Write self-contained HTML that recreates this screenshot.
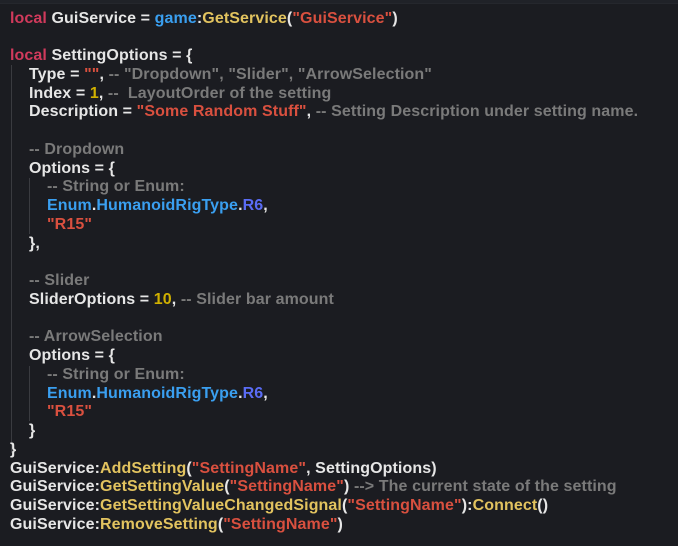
<!DOCTYPE html><html><head><style>
html,body{margin:0;padding:0;background:#1b1c21;width:678px;height:546px;overflow:hidden}
.top{position:absolute;left:0;top:0;width:678px;height:3px;background:#202228;border-bottom:1px solid #25272d}
#c{position:absolute;left:10px;top:9.5px;font:bold 16px/18.76px "Liberation Sans",sans-serif;color:#e6e6e6;letter-spacing:0.1px}
#c div{height:18.76px;white-space:pre}
.i1{padding-left:19px}.i2{padding-left:37px}
.k{color:#d13a5c}.b{color:#3a9ff0}.f{color:#e2c35f}.s{color:#d9503f}.c{color:#7a7a7a}.n{color:#d0b000}.r{color:#5a6cf5}
.g{position:absolute;width:1px;background:#3a3b40}
</style></head><body>
<div class="top"></div>
<div class="g" style="left:11px;top:65px;height:388px"></div>
<div class="g" style="left:29px;top:178px;height:56px"></div>
<div class="g" style="left:29px;top:366px;height:55px"></div>
<div id="c">
<div><span class="k">local</span> GuiService = <span class="b">game</span>:<span class="f">GetService</span>(<span class="s">"GuiService"</span>)</div>
<div></div>
<div><span class="k">local</span> SettingOptions = {</div>
<div class="i1">Type = <span class="s">""</span>, <span class="c">-- "Dropdown", "Slider", "ArrowSelection"</span></div>
<div class="i1">Index = <span class="n">1</span>, <span class="c">--  LayoutOrder of the setting</span></div>
<div class="i1">Description = <span class="s">"Some Random Stuff"</span>, <span class="c">-- Setting Description under setting name.</span></div>
<div></div>
<div class="i1"><span class="c">-- Dropdown</span></div>
<div class="i1">Options = {</div>
<div class="i2"><span class="c">-- String or Enum:</span></div>
<div class="i2"><span class="b">Enum</span>.<span class="b">HumanoidRigType</span>.<span class="r">R6</span>,</div>
<div class="i2"><span class="s">"R15"</span></div>
<div class="i1">},</div>
<div></div>
<div class="i1"><span class="c">-- Slider</span></div>
<div class="i1">SliderOptions = <span class="n">10</span>, <span class="c">-- Slider bar amount</span></div>
<div></div>
<div class="i1"><span class="c">-- ArrowSelection</span></div>
<div class="i1">Options = {</div>
<div class="i2"><span class="c">-- String or Enum:</span></div>
<div class="i2"><span class="b">Enum</span>.<span class="b">HumanoidRigType</span>.<span class="r">R6</span>,</div>
<div class="i2"><span class="s">"R15"</span></div>
<div class="i1">}</div>
<div>}</div>
<div>GuiService:<span class="f">AddSetting</span>(<span class="s">"SettingName"</span>, SettingOptions)</div>
<div>GuiService:<span class="f">GetSettingValue</span>(<span class="s">"SettingName"</span>) <span class="c">--&gt; The current state of the setting</span></div>
<div>GuiService:<span class="f">GetSettingValueChangedSignal</span>(<span class="s">"SettingName"</span>):<span class="f">Connect</span>()</div>
<div>GuiService:<span class="f">RemoveSetting</span>(<span class="s">"SettingName"</span>)</div>
</div>
</body></html>
